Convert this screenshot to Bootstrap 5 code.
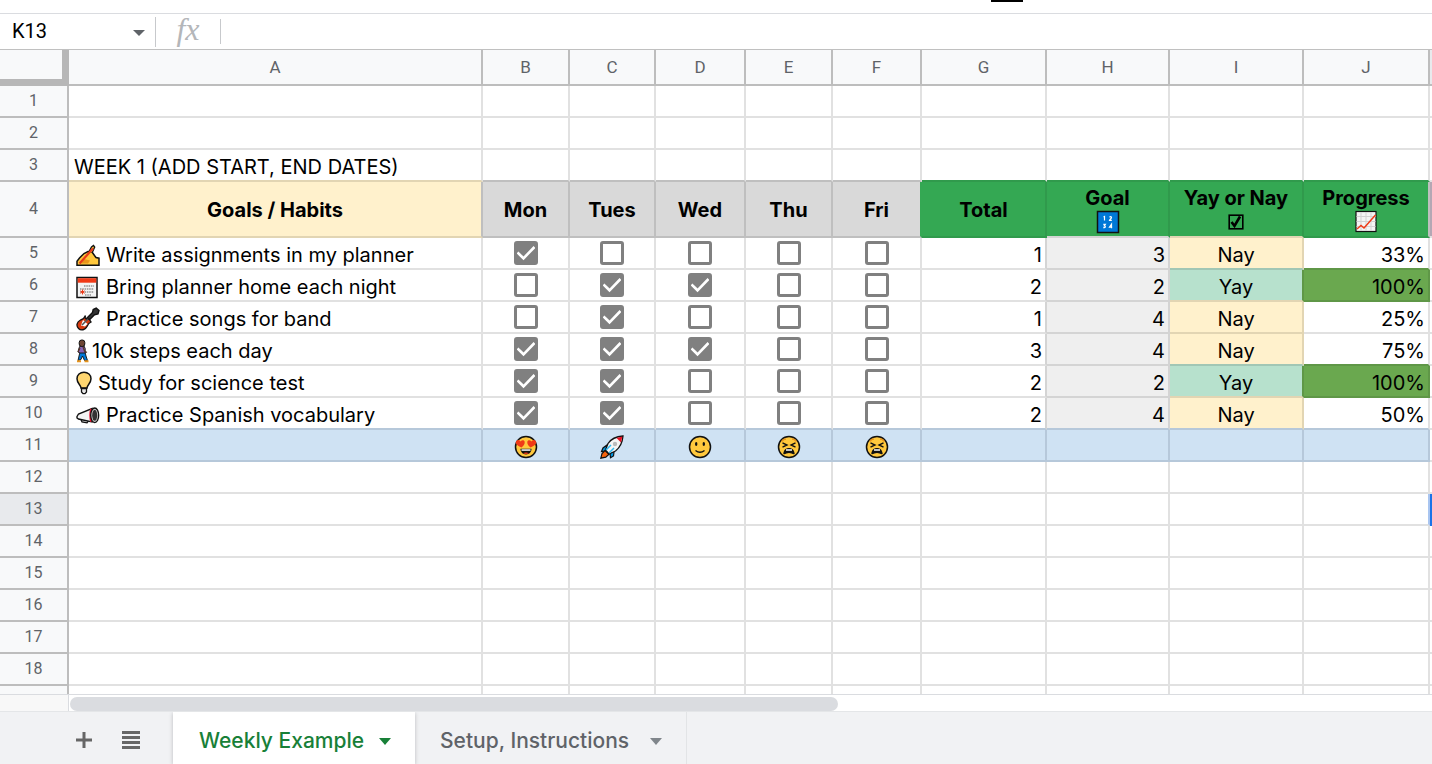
<!DOCTYPE html>
<html lang="en">
<head>
<meta charset="utf-8">
<meta name="viewport" content="width=device-width, initial-scale=1">
<title>Weekly goals tracker</title>
<link rel="stylesheet" href="https://cdn.jsdelivr.net/npm/bootstrap@5.3.0/dist/css/bootstrap.min.css">
<style>
body{font-family:Roboto,"Liberation Sans",sans-serif;color:#000;background:#fff}
/* bars above the grid */
.toolbar-edge{height:14px;border-bottom:1px solid #dadce0}
.toolbar-mark{position:absolute;left:69.2%;top:0;width:32px;height:2px;background:#000}
.formula-bar{height:36px;border-bottom:1px solid #c0c0c0}
.name-box{width:156px;height:30px;border-right:1px solid #c7c9cc;padding:0 10px 2px 12px}
.name-box input{border:0;outline:0;width:100px;padding:0;font-size:20px;line-height:24px;color:#000;background:none}
.plain-btn{border:0;background:none;padding:0;color:#5f6368;line-height:1}
.fx-label{width:64px;padding-bottom:6px;font:italic 32px/28px "Liberation Serif",serif;color:#b4b6b9;text-align:center}
.formula-input{border:0;border-left:1px solid #c7c9cc;height:25px;outline:0;min-width:0;font-size:20px}
/* grid */
.sheet-area{min-height:0}
.sheet-grid{table-layout:fixed;width:100%;border-collapse:separate;border-spacing:0;font-family:Inter,"Noto Sans",sans-serif;font-size:20px;line-height:28px}
.c-num{width:69px}.c-a{width:414px}.c-b{width:87px}.c-c{width:86px}.c-d{width:90px}.c-e{width:87px}.c-f{width:89px}
.c-g{width:125px}.c-h{width:123px}.c-i{width:134px}.c-j{width:126px}
.sheet-grid th,.sheet-grid td{height:32px;padding:0 5px;border:0 solid #e1e1e1;border-width:0 2px 2px 0;vertical-align:middle;overflow:hidden;white-space:nowrap}
.sheet-grid thead th,.sheet-grid tbody th[scope=row]{background:#f8f9fa;border-color:#bdbdbd;color:#5f6368;font:400 17px/20px Roboto,sans-serif;text-align:center}
.sheet-grid tbody th[scope=row]{font-size:16px}
.sheet-grid thead th{height:36px}
.sheet-grid thead th.corner{border-width:0 7px 7px 0;border-color:#b7b7b7}
.sheet-grid tr>:last-child{border-right:0;padding:0}
.sheet-grid thead th:last-child{background:#e8eaed}
.sheet-grid tbody tr.current th[scope=row]{background:#e8eaed}
.sheet-grid tr.day-row>*{height:56px;line-height:24px}
.sheet-grid .day-row th[scope=col]{font-weight:700;text-align:center;padding-top:2px}
.sheet-grid td.goal-name{padding-top:4px;line-height:26px}
.goal-name svg{margin:-4px 6px 0 2px;vertical-align:middle}
.goal-name svg.slim{margin-right:3px}
.sheet-grid .num{text-align:right;padding-top:4px;padding-right:3px;line-height:26px}
.sheet-grid .verdict{text-align:center;padding-top:4px;line-height:26px}
/* fills */
.sheet-grid .f-cream{background:#fff1cc;border-color:#e2d5b3}
.sheet-grid .f-grey{background:#d9d9d9;border-color:#bfbfbf}
.sheet-grid .f-green{background:#34a853;border-color:#309a4c}
.sheet-grid .f-pale{background:#efefef;border-color:#d4d4d4}
.sheet-grid .f-mint{background:#b7e1cd;border-color:#a1c7b5}
.sheet-grid .f-leaf{background:#6aa84f;border-color:#5f9747}
.sheet-grid .f-blue{background:#cfe2f3;border-color:#b6c8da}
.sheet-grid .f-mauve{background:#b4a7b4}
/* grid lines take the colour of the fill that they touch */
.sheet-grid .b-cream{border-bottom-color:#e2d5b3}
.sheet-grid .b-grey{border-bottom-color:#bfbfbf}
.sheet-grid .b-green{border-bottom-color:#309a4c}
.sheet-grid .b-pale{border-bottom-color:#d4d4d4}
.sheet-grid .b-mint{border-bottom-color:#a1c7b5}
.sheet-grid .b-leaf{border-bottom-color:#5f9747}
.sheet-grid .b-blue{border-bottom-color:#b6c8da}
.sheet-grid .r-green{border-right-color:#34a853}
.sheet-grid .r-leaf{border-right-color:#5f9747}
.sheet-grid .r-grey{border-right-color:#bfbfbf}
.sheet-grid .r-pale{border-right-color:#d4d4d4}
.sheet-grid .r-active{border-right-color:#a9c5f0}
.sheet-grid .active-cell{background:#1a73e8;border-color:#1a73e8}
/* tick boxes */
.sheet-grid .tick{text-align:center;padding:0}
.tick .form-check-input{display:block;width:24px;height:24px;margin:0 auto;border:3px solid #808080;border-radius:3px;background-color:#fff;background-origin:border-box;background-size:24px 24px}
.tick .form-check-input:checked{background-color:#808080;background-image:url("data:image/svg+xml,%3csvg xmlns='http://www.w3.org/2000/svg' viewBox='0 0 24 24'%3e%3cpath fill='none' stroke='%23fff' stroke-width='2.6' d='M3.5 11.5l6 5.8L20.5 6'/%3e%3c/svg%3e")}
.sheet-grid .mood{padding-top:4px}
.mood svg,.day-row svg{display:block;margin:0 auto}
/* scroll strip and tabs */
.scroll-strip{height:18px;border-top:1px solid #dadce0;border-bottom:1px solid #e4e6e8}
.scroll-pad{width:69px;background:#f8f8f8;border-right:1px solid #dadce0;margin-right:1px}
.scroll-thumb{flex:22 0 0;height:14px;border-radius:7px;background:#dadce0}
.scroll-rest{flex:17 0 0}
.tab-bar{height:52px;background:#f1f2f4}
.tab-tools{width:173px;padding-left:76px;gap:29px}
.sheet-tab{font-family:Inter,Roboto,sans-serif;font-size:21px;line-height:28px;padding:6px 24px 0 26px;font-weight:500;color:#5f6368;text-decoration:none;white-space:nowrap}
.sheet-tab.is-active{width:242px;color:#188038;background:#fff;box-shadow:0 1px 4px rgba(60,64,67,.3)}
.sheet-tab.is-idle{width:272px;padding-left:25px;border-right:1px solid #e2e4e6}
</style>
</head>
<body class="vh-100 d-flex flex-column overflow-hidden">

<svg width="0" height="0" class="position-absolute" aria-hidden="true">
  <symbol id="i-tired" viewBox="0 0 24 24">
    <circle cx="12" cy="12" r="10.500" fill="#ffc83d" stroke="#111" stroke-width="1.500"/>
    <path d="M5 6.500q1-2.500 4-2.500M19 6.500q-1-2.500-4-2.500" fill="none" stroke="#e8951c" stroke-width="1.600"/>
    <path d="M5.500 7.800l4.500 2.200-4.500 2.200M18.500 7.800L14 10l4.500 2.200" fill="none" stroke="#111" stroke-width="1.400"/>
    <path d="M6.300 19c.3-4 2.500-6 5.700-6s5.400 2 5.700 6c-1.700.6-3.600-1-5.700-1s-4 1.600-5.700 1z" fill="#111"/><path d="M9 15h6" stroke="#fff" stroke-width="1.500"/>
  </symbol>
</svg>

<header class="flex-shrink-0">
  <div class="toolbar-edge position-relative"><span class="toolbar-mark"></span></div>
  <div class="formula-bar d-flex align-items-center">
    <div class="name-box d-flex align-items-center justify-content-between">
      <input type="text" value="K13" aria-label="Name box">
      <button class="plain-btn" type="button" aria-label="Named ranges"><svg class="d-block mt-1" width="12" height="6" viewBox="0 0 12 6"><path d="M0 0h12L6 6z" fill="#5f6368"/></svg></button>
    </div>
    <label class="fx-label" for="formula">fx</label>
    <input id="formula" class="formula-input flex-fill" type="text">
  </div>
</header>

<main class="sheet-area flex-fill overflow-hidden">
<table class="sheet-grid">
  <colgroup><col class="c-num"><col class="c-a"><col class="c-b"><col class="c-c"><col class="c-d"><col class="c-e"><col class="c-f"><col class="c-g"><col class="c-h"><col class="c-i"><col class="c-j"><col></colgroup>
  <thead><tr><th class="corner"></th><th>A</th><th>B</th><th>C</th><th>D</th><th>E</th><th>F</th><th>G</th><th>H</th><th>I</th><th>J</th><th></th></tr></thead>
  <tbody>
  <tr><th scope="row">1</th><td></td><td></td><td></td><td></td><td></td><td></td><td></td><td></td><td></td><td></td><td></td></tr>
  <tr><th scope="row">2</th><td></td><td></td><td></td><td></td><td></td><td></td><td></td><td></td><td></td><td></td><td></td></tr>
  <tr><th scope="row">3</th><td class="goal-name b-cream">WEEK 1 (ADD START, END DATES)</td><td class="b-grey"></td><td class="b-grey"></td><td class="b-grey"></td><td class="b-grey"></td><td class="b-grey"></td><td class="b-green"></td><td class="b-green"></td><td class="b-green"></td><td class="b-green"></td><td></td></tr>
  <tr class="day-row"><th scope="row">4</th><th scope="col" class="f-cream r-grey">Goals / Habits</th><th scope="col" class="f-grey">Mon</th><th scope="col" class="f-grey">Tues</th><th scope="col" class="f-grey">Wed</th><th scope="col" class="f-grey">Thu</th><th scope="col" class="f-grey r-green">Fri</th>
    <th scope="col" class="f-green">Total</th>
    <th scope="col" class="f-green b-pale">Goal
      <svg width="24" height="24" viewBox="0 0 24 24" role="img" aria-label="Numbers"><rect x="1.500" y="1.500" width="21" height="21" fill="#0078d7" stroke="#111" stroke-width="1.500"/><path d="M8.500 10.500V6.500l-1 .5M13.500 7.300q1.300-1.200 2 0c.3 1-1.800 2-2 3h2.300M7.300 14.400h2l-1 1.400c1.800.2 1.200 2.400-1 1.800M15.500 18.200v-4l-2 2.900h2.700" fill="none" stroke="#fff" stroke-width="1.200"/></svg></th>
    <th scope="col" class="f-green b-cream">Yay or Nay
      <svg width="24" height="24" viewBox="0 0 24 24" role="img" aria-label="Checked box"><rect x="5.200" y="5.200" width="13.600" height="13.600" fill="none" stroke="#000" stroke-width="1.600"/><path d="M7.500 12l3 4 5.500-9.500" fill="none" stroke="#000" stroke-width="2.600"/></svg></th>
    <th scope="col" class="f-green r-grey">Progress
      <svg width="24" height="24" viewBox="0 0 24 24" role="img" aria-label="Chart going up"><rect x="2" y="1.500" width="20" height="20" fill="#f4f4f4" stroke="#111" stroke-width="1.200"/><path d="M7 2v19M12 2v19M17 2v19M2.500 6.500h19M2.500 11.500h19M2.500 16.500h19" stroke="#d2d2d2"/><path d="M3 19l4-3.500 3 2.500L21.500 5" fill="none" stroke="#f03a17" stroke-width="1.500"/></svg></th><td class="f-mauve"></td></tr>

  <tr><th scope="row">5</th><td class="goal-name"><svg width="24" height="24" viewBox="0 0 24 24" role="img" aria-label="Writing hand"><path d="M1 22.200v-4l2.500-3.200 4.500-4.500 4-2 4 .5 2.500 3.500L20 14.500l3 .7v7z" fill="#ffc83d" stroke="#111" stroke-width="1.500"/><path d="M4 20.500l4-4.500 6 1.500-2 3z" fill="#e8951c"/><path d="M12.500 9.500l3-5.500 2-1.500 1.200 1.500-2.200 5" fill="#ffc83d" stroke="#111" stroke-width="1.300"/><path d="M3.500 20.500L17 5.500" stroke="#e8391b" stroke-width="2.200"/></svg>Write assignments in my planner</td>
    <td class="tick"><input class="form-check-input" type="checkbox" checked aria-label="Write assignments, Monday"></td><td class="tick"><input class="form-check-input" type="checkbox" aria-label="Write assignments, Tuesday"></td><td class="tick"><input class="form-check-input" type="checkbox" aria-label="Write assignments, Wednesday"></td><td class="tick"><input class="form-check-input" type="checkbox" aria-label="Write assignments, Thursday"></td><td class="tick"><input class="form-check-input" type="checkbox" aria-label="Write assignments, Friday"></td>
    <td class="num r-pale">1</td><td class="num f-pale">3</td><td class="verdict f-cream b-mint">Nay</td><td class="num b-leaf">33%</td><td></td></tr>
  <tr><th scope="row">6</th><td class="goal-name"><svg width="24" height="24" viewBox="0 0 24 24" role="img" aria-label="Calendar"><rect x="1" y="2.500" width="20" height="20" fill="#f4f4f4" stroke="#111" stroke-width="1.500"/><path d="M1.700 3.200h18.600v4.500H1.700z" fill="#f03a17"/><path d="M8 11h10M4 14h14M4 17h14M9 20h6" stroke="#aaa" stroke-width="1.800" stroke-dasharray="1.500 .8"/><path d="M6.500 14.500v5M4.300 15.800l4.400 2.500M8.700 15.800l-4.400 2.500" stroke="#f03a17" stroke-width="1"/></svg>Bring planner home each night</td>
    <td class="tick"><input class="form-check-input" type="checkbox" aria-label="Bring planner, Monday"></td><td class="tick"><input class="form-check-input" type="checkbox" checked aria-label="Bring planner, Tuesday"></td><td class="tick"><input class="form-check-input" type="checkbox" checked aria-label="Bring planner, Wednesday"></td><td class="tick"><input class="form-check-input" type="checkbox" aria-label="Bring planner, Thursday"></td><td class="tick"><input class="form-check-input" type="checkbox" aria-label="Bring planner, Friday"></td>
    <td class="num r-pale">2</td><td class="num f-pale">2</td><td class="verdict f-mint b-cream r-leaf">Yay</td><td class="num f-leaf">100%</td><td></td></tr>
  <tr><th scope="row">7</th><td class="goal-name"><svg width="24" height="24" viewBox="0 0 24 24" role="img" aria-label="Guitar"><path d="M10 12L16.500 5.500l.7-3 3-1.500 2.800 2.500-1 3.500-3.500.7-6.500 6.500z" fill="#333" stroke="#111" stroke-width="1.400"/><path d="M9.500 8.500c-1 3-2.500 3.500-5 4.500-4 2-4.500 6-2 8.500s7 1.500 8.500-2c1-2.500 1.500-3.500 4-4.500l-2-3-2.500.5-1.500-2z" fill="#d83b10" stroke="#111" stroke-width="1.300"/><path d="M7 13l4.500 4-2.500 2.500-4-1z" fill="#fff"/><path d="M6 18l6-6" stroke="#555" stroke-width="1.600"/></svg>Practice songs for band</td>
    <td class="tick"><input class="form-check-input" type="checkbox" aria-label="Practice songs, Monday"></td><td class="tick"><input class="form-check-input" type="checkbox" checked aria-label="Practice songs, Tuesday"></td><td class="tick"><input class="form-check-input" type="checkbox" aria-label="Practice songs, Wednesday"></td><td class="tick"><input class="form-check-input" type="checkbox" aria-label="Practice songs, Thursday"></td><td class="tick"><input class="form-check-input" type="checkbox" aria-label="Practice songs, Friday"></td>
    <td class="num r-pale">1</td><td class="num f-pale">4</td><td class="verdict f-cream">Nay</td><td class="num">25%</td><td></td></tr>
  <tr><th scope="row">8</th><td class="goal-name"><svg class="slim" width="13" height="24" viewBox="0 0 13 24" role="img" aria-label="Person walking"><path d="M4 13h5l1 4 1.500 4.500h-3L6.500 17 5 20.500l-3 1L3 17z" fill="#0078d7" stroke="#111" stroke-width=".9"/><path d="M4 7h4l1.200 2.500V14H4L2 13l1-4z" fill="#8764b8" stroke="#111" stroke-width=".9"/><rect x="3.200" y="1" width="5.600" height="6.500" rx="2.500" fill="#6d4534" stroke="#111" stroke-width="1"/><path d="M7 8l1.500 4 2.500 1.500M4 9l-2 4" fill="none" stroke="#5a3727" stroke-width="1.300"/><path d="M1 22.300h4M8.500 22.300h4" stroke="#e8951c" stroke-width="2"/></svg>10k steps each day</td>
    <td class="tick"><input class="form-check-input" type="checkbox" checked aria-label="10k steps, Monday"></td><td class="tick"><input class="form-check-input" type="checkbox" checked aria-label="10k steps, Tuesday"></td><td class="tick"><input class="form-check-input" type="checkbox" checked aria-label="10k steps, Wednesday"></td><td class="tick"><input class="form-check-input" type="checkbox" aria-label="10k steps, Thursday"></td><td class="tick"><input class="form-check-input" type="checkbox" aria-label="10k steps, Friday"></td>
    <td class="num r-pale">3</td><td class="num f-pale">4</td><td class="verdict f-cream b-mint">Nay</td><td class="num b-leaf">75%</td><td></td></tr>
  <tr><th scope="row">9</th><td class="goal-name"><svg width="16" height="24" viewBox="0 0 16 24" role="img" aria-label="Light bulb"><path d="M5 17c0-3-4-4.500-4-9.300C1 4 4 1.200 8 1.200s7 2.800 7 6.500c0 4.800-4 6.300-4 9.300z" fill="#ffd670" stroke="#111" stroke-width="1.500"/><path d="M5.500 17.500h5V21L9 22.700H7L5.500 21z" fill="#e6e6e6" stroke="#111" stroke-width="1.300"/></svg>Study for science test</td>
    <td class="tick"><input class="form-check-input" type="checkbox" checked aria-label="Study, Monday"></td><td class="tick"><input class="form-check-input" type="checkbox" checked aria-label="Study, Tuesday"></td><td class="tick"><input class="form-check-input" type="checkbox" aria-label="Study, Wednesday"></td><td class="tick"><input class="form-check-input" type="checkbox" aria-label="Study, Thursday"></td><td class="tick"><input class="form-check-input" type="checkbox" aria-label="Study, Friday"></td>
    <td class="num r-pale">2</td><td class="num f-pale">2</td><td class="verdict f-mint b-cream r-leaf">Yay</td><td class="num f-leaf">100%</td><td></td></tr>
  <tr><th scope="row">10</th><td class="goal-name b-blue"><svg width="24" height="24" viewBox="0 0 24 24" role="img" aria-label="Megaphone"><path d="M5 16.500l1 2.500 5 .8 1.500-2" fill="#ddd" stroke="#111" stroke-width="1.300"/><path d="M1 13.500l1.500-2.500L16 5.500v13.500L2.500 16 1 15z" fill="#f4f4f4" stroke="#111" stroke-width="1.400"/><path d="M15 5.800q-2 6.700 0 13" fill="none" stroke="#e8112d" stroke-width="1.500"/><ellipse cx="18.700" cy="12.300" rx="4" ry="7.300" fill="#ccc" stroke="#111" stroke-width="1.300"/><ellipse cx="18.700" cy="12.300" rx="2.500" ry="5.500" fill="#333"/></svg>Practice Spanish vocabulary</td>
    <td class="tick b-blue"><input class="form-check-input" type="checkbox" checked aria-label="Practice Spanish, Monday"></td><td class="tick b-blue"><input class="form-check-input" type="checkbox" checked aria-label="Practice Spanish, Tuesday"></td><td class="tick b-blue"><input class="form-check-input" type="checkbox" aria-label="Practice Spanish, Wednesday"></td><td class="tick b-blue"><input class="form-check-input" type="checkbox" aria-label="Practice Spanish, Thursday"></td><td class="tick b-blue"><input class="form-check-input" type="checkbox" aria-label="Practice Spanish, Friday"></td>
    <td class="num r-pale b-blue">2</td><td class="num f-pale b-blue">4</td><td class="verdict f-cream b-blue">Nay</td><td class="num b-blue">50%</td><td></td></tr>
  <tr><th scope="row">11</th><td class="f-blue"></td>
    <td class="f-blue mood"><svg width="24" height="24" viewBox="0 0 24 24" role="img" aria-label="Heart eyes"><circle cx="12" cy="12" r="10.500" fill="#ffc83d" stroke="#111" stroke-width="1.500"/><path d="M7.500 12.500C3 10.500 1 8.500 2 6.500s3.500-2 4.500 0c1.500-2 4-1.500 4.200.5.200 2-1.200 4-3.200 5.500zM16.500 12.500c4.500-2 6.500-4 5.500-6s-3.500-2-4.500 0c-1.500-2-4-1.500-4.200.5-.2 2 1.200 4 3.200 5.500z" fill="#f03a17"/><path d="M6.500 13.800h11c0 3-2 5.700-5.500 5.700s-5.500-2.700-5.500-5.700z" fill="#111"/><path d="M7.500 14.300h9v1.500h-9z" fill="#fff"/><path d="M9 18.200q3-1.500 6 0-3 1.600-6 0z" fill="#f03a17"/></svg></td>
    <td class="f-blue mood"><svg width="24" height="24" viewBox="0 0 24 24" role="img" aria-label="Rocket"><path d="M7 10l-4 3-1.500 3.500 5-.5zM14 17l-.5 4-3 1.800-.5-5z" fill="#0095e0" stroke="#111" stroke-width="1.200"/><path d="M5 15.500l-3 3L.8 23.200l5-1 3.200-3z" fill="#f7630c" stroke="#111" stroke-width="1.200"/><path d="M5.500 15L8 8.500C11 4 16 1.500 23 1c-.5 6-3 11.500-7.500 15L9 19z" fill="#f6f6f6" stroke="#111" stroke-width="1.300"/><path d="M16.500 3l5.800-1.400-1.300 6z" fill="#e81123"/><path d="M6 15l5-5M9 18l5-5" stroke="#31b9f0" stroke-width="1.500"/><circle cx="15" cy="9" r="2.200" fill="#bbb"/></svg></td>
    <td class="f-blue mood"><svg width="24" height="24" viewBox="0 0 24 24" role="img" aria-label="Slight smile"><circle cx="12" cy="12" r="10.500" fill="#ffc83d" stroke="#111" stroke-width="1.500"/><ellipse cx="8.200" cy="9" rx="1.200" ry="1.900" fill="#111"/><ellipse cx="15.800" cy="9" rx="1.200" ry="1.900" fill="#111"/><path d="M7.500 15.500q4.500 3.500 9 0" fill="none" stroke="#111" stroke-width="1.400"/></svg></td>
    <td class="f-blue mood"><svg width="24" height="24" role="img" aria-label="Tired face"><use href="#i-tired"/></svg></td>
    <td class="f-blue mood"><svg width="24" height="24" role="img" aria-label="Tired face"><use href="#i-tired"/></svg></td>
    <td class="f-blue"></td><td class="f-blue"></td><td class="f-blue"></td><td class="f-blue"></td><td></td></tr>
  <tr><th scope="row">12</th><td></td><td></td><td></td><td></td><td></td><td></td><td></td><td></td><td></td><td></td><td></td></tr>
  <tr class="current"><th scope="row">13</th><td></td><td></td><td></td><td></td><td></td><td></td><td></td><td></td><td></td><td class="r-active"></td><td class="active-cell"></td></tr>
  <tr><th scope="row">14</th><td></td><td></td><td></td><td></td><td></td><td></td><td></td><td></td><td></td><td></td><td></td></tr>
  <tr><th scope="row">15</th><td></td><td></td><td></td><td></td><td></td><td></td><td></td><td></td><td></td><td></td><td></td></tr>
  <tr><th scope="row">16</th><td></td><td></td><td></td><td></td><td></td><td></td><td></td><td></td><td></td><td></td><td></td></tr>
  <tr><th scope="row">17</th><td></td><td></td><td></td><td></td><td></td><td></td><td></td><td></td><td></td><td></td><td></td></tr>
  <tr><th scope="row">18</th><td></td><td></td><td></td><td></td><td></td><td></td><td></td><td></td><td></td><td></td><td></td></tr>
  <tr><th scope="row"></th><td></td><td></td><td></td><td></td><td></td><td></td><td></td><td></td><td></td><td></td><td></td></tr>
  </tbody>
</table>
</main>

<div class="scroll-strip d-flex align-items-end flex-shrink-0">
  <div class="scroll-pad h-100"></div><div class="scroll-thumb"></div><div class="scroll-rest"></div>
</div>

<footer class="tab-bar d-flex flex-shrink-0 overflow-hidden">
  <div class="tab-tools d-flex align-items-center">
    <button class="plain-btn" type="button" aria-label="Add sheet"><svg class="d-block mt-1" width="16" height="16" viewBox="0 0 16 16"><path d="M8 0v16M0 8h16" stroke="#666" stroke-width="3"/></svg></button>
    <button class="plain-btn" type="button" aria-label="All sheets"><svg class="d-block mt-1" width="20" height="18" viewBox="0 0 20 18"><path d="M1 1.500h18M1 6.500h18M1 11.500h18M1 16.500h18" stroke="#666" stroke-width="3"/></svg></button>
  </div>
  <a href="#weekly" class="sheet-tab is-active d-flex align-items-center justify-content-between">Weekly Example<svg width="12" height="7" viewBox="0 0 12 7"><path d="M0 0h12L6 7z" fill="#188038"/></svg></a>
  <a href="#setup" class="sheet-tab is-idle d-flex align-items-center justify-content-between">Setup, Instructions<svg width="12" height="7" viewBox="0 0 12 7"><path d="M0 0h12L6 7z" fill="#80868b"/></svg></a>
</footer>
<script src="https://cdn.jsdelivr.net/npm/bootstrap@5.3.0/dist/js/bootstrap.bundle.min.js"></script>
</body>
</html>
